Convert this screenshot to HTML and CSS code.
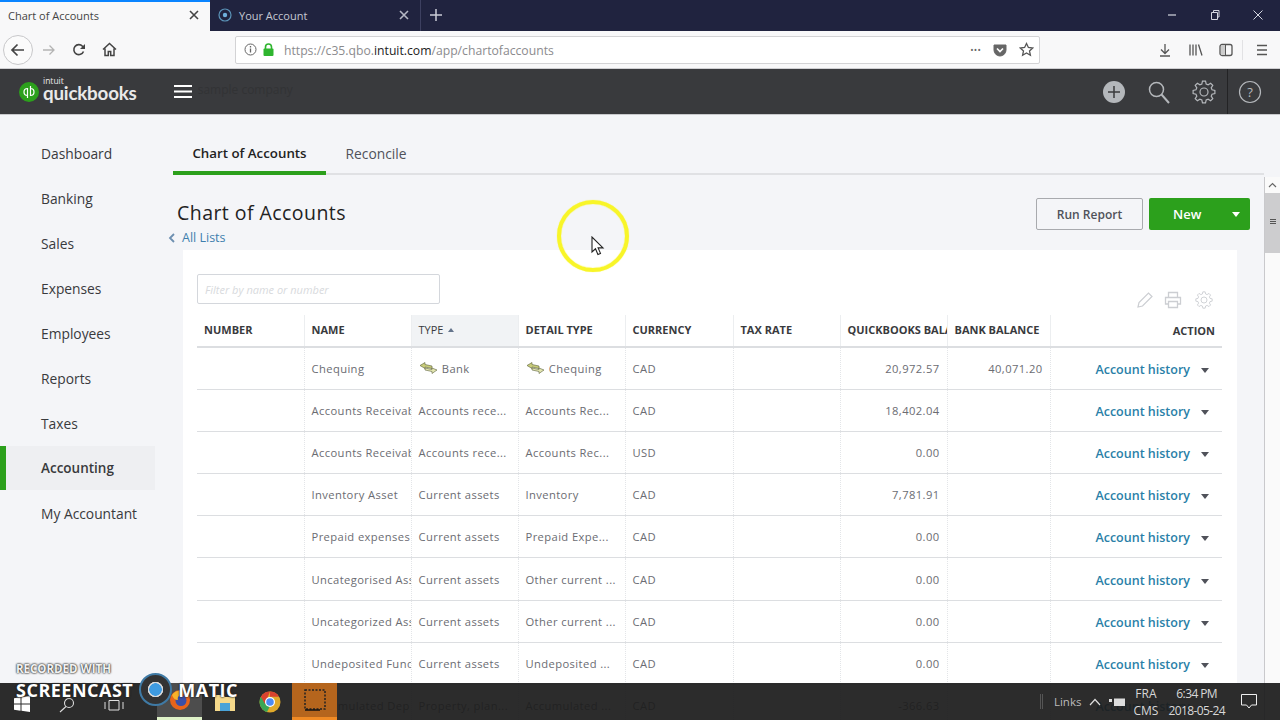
FILE: index.html
```html
<!DOCTYPE html>
<html lang="en">
<head>
  <meta charset="UTF-8" />
  <title>Chart of Accounts</title>
  <link rel="stylesheet" href="styles.css">
</head>
<body>
  <div class="tabbar">
    <div class="tab active">
      <span class="tab-title">Chart of Accounts</span>
      <svg class="tab-close" width="12" height="12" viewBox="0 0 12 12"><path d="M2 2l8 8M10 2l-8 8" stroke="#444" stroke-width="1.6"/></svg>
    </div>
    <div class="tab other">
      <svg width="14" height="14" viewBox="0 0 14 14"><circle cx="7" cy="7" r="6" fill="none" stroke="#5b93b8" stroke-width="1.2"/><circle cx="7" cy="7" r="2.2" fill="#6fb0dc"/></svg>
      <span class="tab-title">Your Account</span>
      <svg class="tab-close" width="12" height="12" viewBox="0 0 12 12"><path d="M2 2l8 8M10 2l-8 8" stroke="#b5b8c4" stroke-width="1.6"/></svg>
    </div>
    <svg class="new-tab" width="14" height="14" viewBox="0 0 14 14"><path d="M7 1v12M1 7h12" stroke="#c9ccd6" stroke-width="1.5"/></svg>
    <div class="win-btns">
      <svg width="12" height="12" viewBox="0 0 12 12"><path d="M2 6h8" stroke="#d5d7e0" stroke-width="1.2"/></svg>
      <svg width="12" height="12" viewBox="0 0 12 12"><path d="M2.500 3.500h6v7h-6zM4.500 3.500v-2h5.500v6.500h-1.500" fill="none" stroke="#d5d7e0"/></svg>
      <svg width="12" height="12" viewBox="0 0 12 12"><path d="M1.500 1.500l9 9M10.500 1.500l-9 9" stroke="#d5d7e0"/></svg>
    </div>
  </div>

  <div class="toolbar">
    <div class="back-btn">
      <svg width="16" height="16" viewBox="0 0 16 16"><path d="M14 8H2.500M7.500 2.500L2 8l5.500 5.500" fill="none" stroke="#444" stroke-width="1.700"/></svg>
    </div>
    <svg class="nav-icon" width="14" height="14" viewBox="0 0 14 14"><path d="M1 7h11M7.500 2.500L12 7l-4.500 4.500" fill="none" stroke="#b4b4b4" stroke-width="1.300"/></svg>
    <svg class="nav-icon" width="14" height="14" viewBox="0 0 14 14"><path d="M11.500 8.500A5 5 0 1 1 10.500 3.200L12.500 5" fill="none" stroke="#444" stroke-width="1.600"/><path d="M13 1v5H8z" fill="#444"/></svg>
    <svg class="nav-icon" width="15" height="15" viewBox="0 0 15 15"><path d="M1 7.500L7.500 1.500 14 7.500M3 6.500v7h3.300v-4h2.400v4H12v-7" fill="none" stroke="#444" stroke-width="1.500"/></svg>
    <div class="urlbar">
      <svg width="13" height="13" viewBox="0 0 13 13"><circle cx="6.500" cy="6.500" r="5.500" fill="none" stroke="#666"/><path d="M6.500 5.500v4M6.500 3v1.500" stroke="#666" stroke-width="1.300"/></svg>
      <svg class="lock" width="11" height="13" viewBox="0 0 11 13"><path d="M2.500 6V4a3 3 0 0 1 6 0v2" fill="none" stroke="#2fb52f" stroke-width="1.600"/><rect x="0.500" y="5.500" width="10" height="7.500" rx="1" fill="#2fb52f"/></svg>
      <span class="url">https://c35.qbo.<b>intuit.com</b>/app/chartofaccounts</span>
      <div class="url-icons">
        <span class="dots">•••</span>
        <svg width="14" height="14" viewBox="0 0 14 14"><path d="M1 2h12v5a6 6 0 0 1-12 0z" fill="#666" stroke="#666" stroke-linejoin="round"/><path d="M4 5.500l3 3 3-3" fill="none" stroke="#fff" stroke-width="1.700"/></svg>
        <svg width="15" height="15" viewBox="0 0 15 15"><path d="M7.500 1.500l1.900 4 4.300.5-3.200 2.900.9 4.300-3.900-2.200-3.900 2.200.9-4.300L1.300 6l4.300-.5z" fill="none" stroke="#555" stroke-width="1.300"/></svg>
      </div>
    </div>
    <div class="tool-icons">
      <svg width="14" height="14" viewBox="0 0 14 14"><path d="M7 1v9M3 6.500L7 10.500l4-4M2 13h10" fill="none" stroke="#555" stroke-width="1.300"/></svg>
      <svg width="15" height="14" viewBox="0 0 15 14"><path d="M2 1.500v11M5 1.500v11M8 1.500v11M10.500 1.500l3.500 11" fill="none" stroke="#555" stroke-width="1.300"/></svg>
      <svg width="14" height="14" viewBox="0 0 14 14"><rect x="1" y="1.500" width="12" height="11" rx="2" fill="none" stroke="#555" stroke-width="1.300"/><path d="M6.500 2v10" stroke="#555"/><rect x="2" y="2.500" width="4" height="9" fill="#ccc"/></svg>
      <span class="tool-sep"></span>
      <svg width="14" height="14" viewBox="0 0 14 14"><path d="M2 2.500h10M2 7h10M2 11.500h10" stroke="#555" stroke-width="1.400"/></svg>
    </div>
  </div>

  <header class="qb-header">
    <svg class="qb-mark" width="20" height="20" viewBox="0 0 20 20"><circle cx="10" cy="10" r="10" fill="#2ca01c"/><path d="M8.500 6.500a3.500 3.500 0 1 0 0 7V6.500zM8.500 12v4M11.500 13.500a3.500 3.500 0 1 0 0-7v7zM11.500 8V4" fill="none" stroke="#fff" stroke-width="1.200"/></svg>
    <div class="qb-logo">
      <span class="qb-intuit">intuit</span>
      <span class="qb-name">quickbooks</span>
    </div>
    <svg class="burger" width="18" height="15" viewBox="0 0 18 15"><path d="M0 2h18M0 7.500h18M0 13h18" stroke="#fff" stroke-width="2.200"/></svg>
    <span class="qb-company">sample company</span>
    <div class="qb-icons">
      <svg width="24" height="24" viewBox="0 0 24 24"><circle cx="12" cy="12" r="11" fill="#b4b7bb"/><path d="M12 6v12M6 12h12" stroke="#3a3b3d" stroke-width="1.500"/></svg>
      <svg width="24" height="24" viewBox="0 0 24 24"><circle cx="9.500" cy="9.500" r="7" fill="none" stroke="#b4b7bb" stroke-width="1.500"/><path d="M14.500 14.500L22 23" stroke="#b4b7bb" stroke-width="2"/></svg>
      <svg width="24" height="24" viewBox="0 0 24 24"><use href="#gear" stroke="#b4b7bb"/></svg>
      <span class="qb-help-sep"></span>
      <svg width="24" height="24" viewBox="0 0 24 24"><circle cx="12" cy="12" r="10.500" fill="none" stroke="#b4b7bb" stroke-width="1.200"/><text x="12" y="17" text-anchor="middle" class="help-q">?</text></svg>
    </div>
  </header>

  <div class="page">
    <nav class="sidebar">
      <a>Dashboard</a>
      <a>Banking</a>
      <a>Sales</a>
      <a>Expenses</a>
      <a>Employees</a>
      <a>Reports</a>
      <a>Taxes</a>
      <a class="current">Accounting</a>
      <a>My Accountant</a>
    </nav>

    <main class="main">
      <div class="subnav">
        <a class="subtab on">Chart of Accounts</a>
        <a class="subtab">Reconcile</a>
      </div>

      <div class="content">
        <div class="title-row">
          <div>
            <h1>Chart of Accounts</h1>
            <a class="all-lists"><svg width="8" height="10" viewBox="0 0 8 10"><path d="M6 1L2 5l4 4" fill="none" stroke="#6d8fb0" stroke-width="1.800"/></svg> All Lists</a>
          </div>
          <div class="title-btns">
            <button class="btn-plain">Run Report</button>
            <div class="btn-new"><span>New</span><i class="caret white"></i></div>
          </div>
        </div>

        <section class="panel">
          <div class="filter-row">
            <input class="filter" placeholder="Filter by name or number">
            <div class="table-tools">
              <svg width="18" height="18" viewBox="0 0 18 18"><path d="M2 16l1-4.500L12.500 2l3.500 3.500L6.500 15z" fill="none" stroke="#ccced2" stroke-width="1.200"/></svg>
              <svg width="18" height="18" viewBox="0 0 18 18"><path d="M4.500 6V1.500h9V6M4.500 13H1.500V6.500h15V13h-3M4.500 10.500h9v6h-9z" fill="none" stroke="#ccced2" stroke-width="1.300"/></svg>
              <svg width="18" height="18" viewBox="0 0 24 24"><use href="#gear" stroke="#ccced2"/></svg>
            </div>
          </div>

          <table class="coa">
            <colgroup>
              <col class="c-std"><col class="c-std"><col class="c-std"><col class="c-std"><col class="c-cur"><col class="c-std"><col class="c-std"><col class="c-bank"><col>
            </colgroup>
            <thead>
              <tr>
                <th>NUMBER</th><th>NAME</th>
                <th class="sorted">TYPE <i class="sort-up"></i></th>
                <th>DETAIL TYPE</th><th>CURRENCY</th><th>TAX RATE</th>
                <th class="clip">QUICKBOOKS BALANCE</th><th>BANK BALANCE</th><th class="act">ACTION</th>
              </tr>
            </thead>
            <tbody>
              <tr><td></td><td class="clip">Chequing</td><td class="clip"><svg class="bank-ic" width="19" height="12" viewBox="0 0 19 12"><use href="#bank"/></svg> Bank</td><td class="clip"><svg class="bank-ic" width="19" height="12" viewBox="0 0 19 12"><use href="#bank"/></svg> Chequing</td><td>CAD</td><td></td><td class="num">20,972.57</td><td class="num">40,071.20</td><td class="act"><a class="hist">Account history</a><i class="caret"></i></td></tr>
              <tr><td></td><td class="clip">Accounts Receivable</td><td class="clip">Accounts rece...</td><td class="clip">Accounts Rec...</td><td>CAD</td><td></td><td class="num">18,402.04</td><td></td><td class="act"><a class="hist">Account history</a><i class="caret"></i></td></tr>
              <tr><td></td><td class="clip">Accounts Receivable</td><td class="clip">Accounts rece...</td><td class="clip">Accounts Rec...</td><td>USD</td><td></td><td class="num">0.00</td><td></td><td class="act"><a class="hist">Account history</a><i class="caret"></i></td></tr>
              <tr><td></td><td class="clip">Inventory Asset</td><td class="clip">Current assets</td><td class="clip">Inventory</td><td>CAD</td><td></td><td class="num">7,781.91</td><td></td><td class="act"><a class="hist">Account history</a><i class="caret"></i></td></tr>
              <tr><td></td><td class="clip">Prepaid expenses</td><td class="clip">Current assets</td><td class="clip">Prepaid Expe...</td><td>CAD</td><td></td><td class="num">0.00</td><td></td><td class="act"><a class="hist">Account history</a><i class="caret"></i></td></tr>
              <tr><td></td><td class="clip">Uncategorised Asset</td><td class="clip">Current assets</td><td class="clip">Other current ...</td><td>CAD</td><td></td><td class="num">0.00</td><td></td><td class="act"><a class="hist">Account history</a><i class="caret"></i></td></tr>
              <tr><td></td><td class="clip">Uncategorized Asset</td><td class="clip">Current assets</td><td class="clip">Other current ...</td><td>CAD</td><td></td><td class="num">0.00</td><td></td><td class="act"><a class="hist">Account history</a><i class="caret"></i></td></tr>
              <tr><td></td><td class="clip">Undeposited Funds</td><td class="clip">Current assets</td><td class="clip">Undeposited ...</td><td>CAD</td><td></td><td class="num">0.00</td><td></td><td class="act"><a class="hist">Account history</a><i class="caret"></i></td></tr>
              <tr><td></td><td class="clip">Accumulated Dep</td><td class="clip">Property, plan...</td><td class="clip">Accumulated ...</td><td>CAD</td><td></td><td class="num">-366.63</td><td></td><td class="act"><a class="hist">Account history</a><i class="caret"></i></td></tr>
            </tbody>
          </table>
        </section>
      </div>
    </main>

    <div class="scrollbar">
      <svg width="9" height="6" viewBox="0 0 9 6"><path d="M1 5l3.500-3.500L8 5" fill="none" stroke="#666" stroke-width="1.200"/></svg>
      <div class="thumb"><span></span><span></span><span></span></div>
    </div>
  </div>

  <!-- recorder cursor highlight -->
  <div class="cursor-ring"></div>
  <svg class="cursor" width="14" height="20" viewBox="0 0 14 20"><path d="M1 1v15l3.500-3.200 2.400 5.700 2.600-1.100-2.400-5.500H12z" fill="#fff" stroke="#222" stroke-width="1.100"/></svg>

  <footer class="taskbar">
    <svg class="win-logo" width="16" height="16" viewBox="0 0 16 16"><path d="M0 2.300l6.500-1v6.300H0zM7.500 1.200L16 0v7.600H7.500zM0 8.500h6.500v6.300l-6.500-1zM7.500 8.500H16V16l-8.500-1.200z" fill="#fff"/></svg>
    <svg class="task-ic search" width="16" height="16" viewBox="0 0 16 16"><circle cx="10" cy="6" r="4.500" fill="none" stroke="#ddd" stroke-width="1.100"/><path d="M7 9.500L1 15" stroke="#ddd" stroke-width="1.100"/></svg>
    <svg class="task-ic view" width="20" height="14" viewBox="0 0 20 14"><path d="M5 2.500h10v9.500H5zM1 4v7M19 4v7" fill="none" stroke="#ddd"/></svg>
    <div class="task-app ff">
      <svg width="22" height="22" viewBox="0 0 22 22"><circle cx="11" cy="11" r="10" fill="#e8641b"/><circle cx="12" cy="11.500" r="5.500" fill="#3a4fa8"/><path d="M3 6c3-5 12-6 16 0-3-2-5-1-6 0-3 0-5 2-4 5-3 0-5-2-6-5z" fill="#f7b32b"/></svg>
    </div>
    <div class="task-app">
      <svg width="22" height="20" viewBox="0 0 22 20"><path d="M1 3h8l2 2h10v14H1z" fill="#f5d98b"/><rect x="6" y="11" width="10" height="8" fill="#4aa3d8"/></svg>
    </div>
    <div class="task-app">
      <svg width="22" height="22" viewBox="0 0 22 22"><circle cx="11" cy="11" r="10.500" fill="#e0a92a"/><path d="M11 .5a10.500 10.500 0 0 1 9.100 5.250H11z" fill="#d9432f"/><path d="M1.900 5.800A10.500 10.500 0 0 0 8 21L12 13z" fill="#3aa655"/><path d="M11 .5A10.500 10.500 0 0 0 1.900 5.800L6 13z" fill="#d9432f"/><circle cx="11" cy="11" r="5" fill="#fff"/><circle cx="11" cy="11" r="3.800" fill="#4b8bf4"/></svg>
    </div>
    <div class="task-app capture">
      <svg width="22" height="22" viewBox="0 0 22 22"><rect x="1" y="1" width="20" height="19" fill="none" stroke="#222" stroke-width="1.500" stroke-dasharray="2 1.500"/><path d="M1 21h15" stroke="#111" stroke-width="1.500"/></svg>
    </div>
    <div class="tray">
      <span class="tray-sep"></span>
      <span class="links">Links</span>
      <svg width="12" height="8" viewBox="0 0 12 8"><path d="M1 7l5-5.500L11 7" fill="none" stroke="#ddd" stroke-width="1.200"/></svg>
      <svg width="16" height="10" viewBox="0 0 16 10"><rect x="5" y="1.500" width="11" height="7.500" fill="#ddd"/><path d="M0 2h3v3H0z" fill="#ddd"/></svg>
      <div class="clock-col"><span>FRA</span><span>CMS</span></div>
      <div class="clock-col time"><span>6:34 PM</span><span>2018-05-24</span></div>
      <svg class="notif" width="16" height="15" viewBox="0 0 16 15"><path d="M.5.5h15v10.500h-5l-2.500 3-2.500-3h-5z" fill="none" stroke="#eee"/></svg>
    </div>
  </footer>

  <div class="recorded">
    <span class="rec-top">RECORDED WITH</span>
    <div class="rec-main">
      <span>SCREENCAST</span>
      <i class="rec-dot"></i>
      <span>MATIC</span>
    </div>
  </div>

  <svg class="defs" width="0" height="0">
    <defs>
      <g id="gear" fill="none" stroke-width="1.200">
        <circle cx="12" cy="12" r="4"/>
        <path d="M9.850 3.980L10.470 1.110H13.530L14.150 3.980L16.150 4.810L18.620 3.210L20.790 5.380L19.190 7.850L20.020 9.850L22.890 10.470V13.530L20.020 14.150L19.190 16.150L20.790 18.620L18.620 20.790L16.150 19.190L14.150 20.020L13.530 22.890H10.470L9.850 20.020L7.850 19.190L5.380 20.790L3.210 18.620L4.810 16.150L3.980 14.150L1.110 13.530V10.470L3.980 9.850L4.810 7.850L3.210 5.380L5.380 3.210L7.850 4.810z"/>
      </g>
      <g id="bank" stroke="#5b5f3a" stroke-width=".6">
        <path d="M1 3.500L6 .5v2l7 1.500v2.500l-7-1.500v1.500z" fill="#c8cc7a"/>
        <path d="M18 8l-5 3.500v-2l-7-1.500v-2l7 1.500v-1.500z" fill="#e3e6b0"/>
      </g>
    </defs>
  </svg>
</body>
</html>
```
FILE: styles.css
```css
* {
  margin: 0;
  padding: 0;
  box-sizing: border-box;
}
html, body {
  width: 1280px;
  height: 720px;
  overflow: hidden;
}
body {
  font-family: 'Open Sans', sans-serif;
  background: #f4f5f8;
  color: #393a3d;
  display: flex;
  flex-direction: column;
}
.defs {
  position: absolute;
}

/* browser chrome */
.tabbar {
  height: 31px;
  background: #20233f;
  display: flex;
  align-items: center;
  flex-shrink: 0;
}
.tab {
  height: 31px;
  display: flex;
  align-items: center;
  font-size: 11px;
}
.tab.active {
  width: 210px;
  background: #f8f8f9;
  border-top: 2px solid #0a84ff;
  color: #444;
  padding: 0 10px 3px 8px;
}
.tab.other {
  width: 211px;
  color: #c5c8d2;
  padding: 0 10px 1px 8px;
  gap: 7px;
  border-right: 1px solid #3d4060;
}
.tab-close {
  margin-left: auto;
}
.new-tab {
  margin-left: 8px;
  margin-bottom: 1px;
}
.win-btns {
  margin-left: auto;
  display: flex;
  gap: 31px;
  padding-right: 16px;
  padding-bottom: 1px;
}
.toolbar {
  height: 38px;
  background: #f8f8f9;
  display: flex;
  align-items: center;
  padding-left: 3px;
  flex-shrink: 0;
  border-bottom: 1px solid #cfcfd2;
}
.back-btn {
  width: 30px;
  height: 30px;
  border-radius: 50%;
  border: 1px solid #c8c8ca;
  background: #fbfbfb;
  display: flex;
  align-items: center;
  justify-content: center;
}
.nav-icon {
  margin-left: 9px;
  margin-right: 7px;
}
.urlbar {
  margin-left: 111px;
  width: 805px;
  height: 28px;
  background: #fff;
  border: 1px solid #d3d3d5;
  border-radius: 2px;
  display: flex;
  align-items: center;
  padding: 0 5px 0 8px;
  gap: 6px;
}
.url {
  margin-left: 4px;
  margin-top: 1px;
  font-size: 12.200px;
  color: #8b8b8e;
}
.url b {
  font-weight: 400;
  color: #222;
}
.url-icons {
  margin-left: auto;
  display: flex;
  align-items: center;
  gap: 12px;
}
.dots {
  font-size: 9px;
  color: #666;
  letter-spacing: 0.2px;
}
.tool-icons {
  margin-left: auto;
  display: flex;
  align-items: center;
  gap: 16px;
  padding-right: 11px;
}
.tool-sep {
  width: 1px;
  height: 20px;
  background: #e2e2e4;
  margin: 0 -4px 0 -7px;
}

/* quickbooks top bar */
.qb-header {
  height: 46px;
  background: #393a3d;
  border-bottom: 1px solid #c8c9cc;
  display: flex;
  align-items: center;
  padding-left: 19px;
  flex-shrink: 0;
}
.qb-logo {
  margin-left: 4px;
  display: flex;
  flex-direction: column;
  color: #e9e9e9;
  line-height: 1;
  margin-top: -3px;
}
.qb-intuit {
  font-size: 8.500px;
  height: 7px;
  line-height: 7px;
}
.qb-name {
  font-family: 'Lato', sans-serif;
  font-size: 18.800px;
  font-weight: 700;
  letter-spacing: -0.2px;
}
.burger {
  margin-left: 37px;
}
.qb-company {
  margin-left: 6px;
  font-size: 12px;
  color: #323335;
  margin-top: -4px;
}
.qb-icons {
  margin-left: auto;
  display: flex;
  align-items: center;
  gap: 21px;
  padding-right: 18px;
}
.qb-help-sep {
  width: 1px;
  height: 45px;
  background: #232325;
  margin: 0 -11px 0 -10px;
}
.help-q {
  font: 13px 'Open Sans', sans-serif;
  fill: #b4b7bb;
}

/* page */
.page {
  flex: 1;
  display: flex;
  min-height: 0;
}
.sidebar {
  width: 155px;
  flex-shrink: 0;
  padding-top: 16px;
  display: flex;
  flex-direction: column;
}
.sidebar a {
  height: 45px;
  display: flex;
  align-items: center;
  padding-left: 41px;
  font-size: 13.800px;
  color: #393a3d;
}
.sidebar a.current {
  height: 44px;
  background: #eeeff2;
  border-left: 6px solid #2ca01c;
  padding-left: 35px;
  font-size: 13.500px;
  font-weight: 600;
  margin-bottom: 1px;
}
.main {
  width: 1109px;
  flex-shrink: 0;
  overflow: hidden;
}
.subnav {
  height: 60px;
  margin-left: 18px;
  border-bottom: 2px solid #e0e1e4;
  display: flex;
  align-items: stretch;
}
.subtab {
  width: 153px;
  padding-top: 29px;
  text-align: center;
  font-size: 13.800px;
  color: #50525a;
}
.subtab + .subtab {
  width: 100px;
}
.subtab.on {
  color: #222;
  font-size: 13.300px;
  font-weight: 600;
  border-bottom: 4px solid #2ca01c;
  margin-bottom: -2px;
}
.content {
  padding: 0 14px 0 13px;
}
.title-row {
  height: 75px;
  display: flex;
  justify-content: space-between;
}
h1 {
  font-size: 19.500px;
  font-weight: 400;
  color: #222;
  margin: 24px 0 0 9px;
  line-height: 27px;
  letter-spacing: 0.45px;
}
.all-lists {
  display: flex;
  align-items: center;
  gap: 6px;
  margin-top: 3px;
  font-size: 12.500px;
  color: #3e7fae;
}
.title-btns {
  display: flex;
  gap: 6px;
  padding-top: 23px;
  height: 56px;
}
.btn-plain {
  width: 107px;
  height: 32px;
  border: 1px solid #a8aaae;
  border-radius: 2px;
  background: transparent;
  font: 600 12px 'Open Sans', sans-serif;
  color: #50525a;
}
.btn-new {
  width: 101px;
  height: 32px;
  background: #2ca01c;
  border-radius: 2px;
  color: #fff;
  font-size: 13px;
  font-weight: 600;
  display: flex;
  align-items: center;
  padding-left: 24px;
}
.btn-new .caret {
  margin-left: auto;
  margin-right: 10px;
}
.panel {
  width: 1054px;
  margin-left: 15px;
  background: #fff;
  padding: 24px 15px 0 14px;
}
.filter-row {
  display: flex;
  justify-content: space-between;
  height: 41px;
}
.filter {
  width: 243px;
  height: 30px;
  border: 1px solid #d4d7dc;
  border-radius: 2px;
  padding-left: 7px;
  font: italic 11px 'Open Sans', sans-serif;
}
.filter::placeholder {
  color: #d8dadd;
}
.table-tools {
  display: flex;
  gap: 10px;
  padding: 17px 9px 0 0;
}
.table-tools svg:last-child {
  margin-left: 3px;
}

/* table */
.coa {
  width: 1025px;
  table-layout: fixed;
  border-collapse: collapse;
}
.c-std {
  width: 107px;
}
.c-cur {
  width: 108px;
}
.c-bank {
  width: 103px;
}
.coa th {
  height: 32px;
  text-align: left;
  font-size: 11px;
  font-weight: 700;
  color: #393a3d;
  padding: 0 7px 2px 7px;
  border-bottom: 2px solid #dcdee1;
  border-left: 1px solid #eceef0;
  white-space: nowrap;
  overflow: hidden;
}
.coa th:first-child {
  border-left: 0;
}
.coa th.sorted {
  background: #f1f3f5;
  font-weight: 400;
}
.coa td {
  height: 42.200px;
  font-size: 11.200px;
  letter-spacing: 0.4px;
  color: #6b6c72;
  padding: 0 7px;
  border-bottom: 1px solid #dcdee1;
  border-left: 1px dotted #e3e5e8;
  white-space: nowrap;
}
.coa td:first-child {
  border-left: 0;
}
.clip {
  overflow: hidden;
}
.coa td.num {
  text-align: right;
}
.coa .act {
  text-align: right;
}
.coa td.act {
  padding: 2px 13px 0 0;
}
.coa th.act {
  padding-bottom: 1px;
}
.hist {
  font-size: 12.500px;
  font-weight: 600;
  letter-spacing: 0;
  color: #2a7fa8;
}
.bank-ic {
  vertical-align: -1px;
  margin-right: 1px;
}
.caret {
  display: inline-block;
  width: 0;
  height: 0;
  border-left: 4.500px solid transparent;
  border-right: 4.500px solid transparent;
  border-top: 5px solid #50525a;
  margin-left: 11px;
  vertical-align: 1px;
}
.caret.white {
  border-top-color: #fff;
}
.sort-up {
  display: inline-block;
  width: 0;
  height: 0;
  border-left: 3.500px solid transparent;
  border-right: 3.500px solid transparent;
  border-bottom: 4.500px solid #64748b;
  margin-left: 2px;
  vertical-align: 2px;
}

/* page scrollbar */
.scrollbar {
  width: 16px;
  margin-top: 62px;
  background: #fafafa;
  border-left: 1px solid #c9c9cc;
  display: flex;
  flex-direction: column;
  align-items: center;
  padding-top: 5px;
}
.thumb {
  width: 15px;
  height: 60px;
  margin-top: 5px;
  background: #cdcdcf;
  display: flex;
  flex-direction: column;
  align-items: center;
  gap: 1px;
  padding-top: 26px;
}
.thumb span {
  width: 6px;
  height: 1px;
  background: #555;
}

/* overlays: recorder + desktop */
.cursor-ring {
  position: absolute;
  left: 557px;
  top: 200px;
  width: 72px;
  height: 72px;
  border-radius: 50%;
  border: 4px solid #f8f528;
  box-shadow: 0 0 1px #f8f528, inset 0 0 1px #f8f528;
}
.cursor {
  position: absolute;
  left: 591px;
  top: 236px;
}
.taskbar {
  position: absolute;
  left: 0;
  right: 0;
  bottom: 0;
  height: 37px;
  background: rgba(28, 28, 28, 0.93);
  display: flex;
  align-items: center;
  color: #ddd;
}
.win-logo {
  margin-left: 14px;
  margin-top: 4px;
}
.task-ic.search {
  margin-left: 29px;
  margin-top: 6px;
}
.task-ic.view {
  margin-left: 29px;
  margin-top: 6px;
}
.task-app {
  width: 45px;
  height: 37px;
  display: flex;
  align-items: center;
  justify-content: center;
}
.task-app.ff {
  margin-left: 33px;
  background: rgba(255, 255, 255, 0.16);
  border-bottom: 3px solid #dff2c8;
}
.task-app.capture {
  background: #b5651d;
  border-bottom: 3px solid #f08a24;
}
.tray {
  margin-left: auto;
  display: flex;
  align-items: center;
  gap: 8px;
  padding-right: 23px;
  font-size: 12px;
}
.tray-sep {
  width: 3px;
  height: 15px;
  border-left: 1px solid #555;
  border-right: 1px solid #555;
  margin-right: 3px;
}
.links {
  color: #bbb;
  font-size: 11.500px;
}
.clock-col {
  display: flex;
  flex-direction: column;
  align-items: center;
  line-height: 17px;
  color: #d8d8d8;
}
.clock-col.time {
  margin-left: 2px;
  letter-spacing: -0.6px;
}
.notif {
  margin-left: 8px;
}
.recorded {
  position: absolute;
  left: 16px;
  top: 661px;
  color: #fff;
  font-weight: 700;
  text-shadow: 0 0 2px #222, 0 0 2px #222;
}
.rec-top {
  display: block;
  font-size: 11.500px;
  line-height: 15px;
  color: #f2f2f2;
}
.rec-main {
  display: flex;
  align-items: center;
  font-size: 18px;
  line-height: 24px;
  margin-top: 1px;
  letter-spacing: 0.5px;
}
.rec-dot {
  width: 33px;
  height: 33px;
  border-radius: 50%;
  margin: -4px 6px;
  border: 2px solid #3f7aa5;
  background: radial-gradient(circle, #3f9be0 0 6px, #d8d8d8 6.500px 7.500px, #333 8px);
}
```
